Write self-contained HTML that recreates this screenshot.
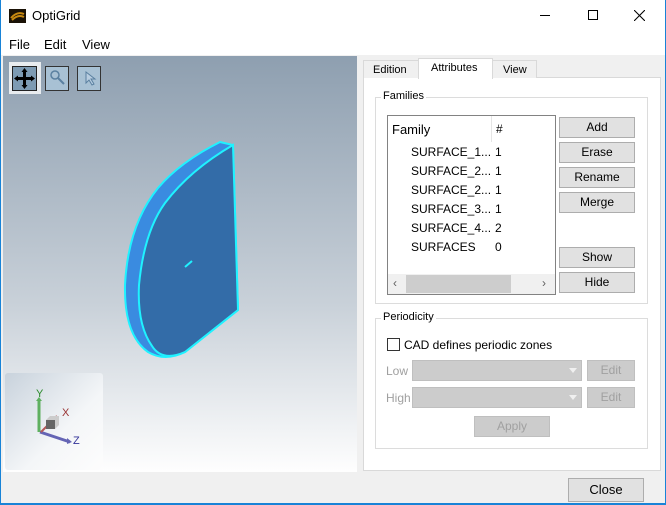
<!DOCTYPE html>
<html><head><meta charset="utf-8"><style>
*{box-sizing:border-box;margin:0;padding:0}
body{width:666px;height:505px;position:relative;background:#f0f0f0;font-family:"Liberation Sans",sans-serif;font-size:12px;color:#000;overflow:hidden}
.abs{position:absolute}
.btn{position:absolute;background:#e1e1e1;border:1px solid #adadad;text-align:center;line-height:18px;font-size:12px}
.dis{color:#a0a0a0;background:#cccccc;border-color:#bfbfbf}
.row{position:absolute;left:411px}
.num{position:absolute;left:495px}
</style></head><body>
<div class="abs" style="left:0;top:0;width:666px;height:32px;background:#fff"></div>
<div class="abs" style="left:9px;top:9px;width:17px;height:14px;background:#1a1206"><svg width="17" height="14"><path d="M2,9 Q8,2 15,5 M3,11 Q9,5 15,8" stroke="#c98a10" stroke-width="2" fill="none"/></svg></div>
<div class="abs" style="left:32px;top:8px;font-size:13px">OptiGrid</div>
<div class="abs" style="left:540px;top:15px;width:10px;height:1px;background:#000"></div>
<div class="abs" style="left:588px;top:10px;width:10px;height:10px;border:1px solid #000"></div>
<svg class="abs" style="left:634px;top:10px" width="11" height="11"><path d="M0,0L11,11M11,0L0,11" stroke="#000" stroke-width="1.1"/></svg>
<div class="abs" style="left:0;top:32px;width:666px;height:23px;background:#fff"></div>
<div class="abs" style="left:9px;top:37px;font-size:13px">File</div>
<div class="abs" style="left:44px;top:37px;font-size:13px">Edit</div>
<div class="abs" style="left:82px;top:37px;font-size:13px">View</div>
<div class="abs" style="left:3px;top:56px;width:354px;height:416px;background:linear-gradient(#8e9fb0,#c9d1d9 60%,#fefefe)"></div>
<div class="abs" style="left:9px;top:62px;width:32px;height:32px;background:#e8ecef"></div>
<div class="abs" style="left:12px;top:66px;width:25px;height:25px;background:#7d9bb3;border:1px solid #222"><svg width="23" height="23"><path d="M11.5,3V20M3,11.5H20" stroke="#000" stroke-width="3"/><path d="M11.5,1l-3,4h6zM11.5,22l-3,-4h6zM1,11.5l4,-3v6zM22,11.5l-4,-3v6z"/></svg></div>
<div class="abs" style="left:45px;top:66px;width:24px;height:25px;background:#a8c1d4;border:1px solid #333"><svg width="22" height="22"><circle cx="9" cy="8" r="4" fill="none" stroke="#5a80a0" stroke-width="1.5"/><path d="M12,11L18,17" stroke="#5a80a0" stroke-width="2"/></svg></div>
<div class="abs" style="left:77px;top:66px;width:24px;height:25px;background:#a8c1d4;border:1px solid #333"><svg width="22" height="22"><path d="M8,5L8,16L11,13L14,18L16,17L13,12L17,12Z" fill="#b8cde0" stroke="#5a80a0"/></svg></div>
<svg class="abs" style="left:0;top:0" width="360" height="480">
<path d="M220,142 L233,145 L238,310 L185,352 Q165,362 148,352 Q124,335 125,285 Q128,225 158,188 Q180,162 220,142 Z" fill="#3a8be0" stroke="#1ff2ff" stroke-width="2"/>
<path d="M233,145 L238,310 L185,352 Q162,362 152,346 Q137,325 139,285 Q144,232 165,203 Q190,170 233,145 Z" fill="#336ca8" stroke="#1ff2ff" stroke-width="2"/>
<path d="M185,267 L192,261" stroke="#1ff2ff" stroke-width="2"/>
</svg>
<div class="abs" style="left:5px;top:373px;width:98px;height:97px;background:linear-gradient(135deg,#c8d2dc,#f4f6f8 60%,#fdfdfd);border-radius:3px"></div>
<svg class="abs" style="left:0;top:370px" width="110" height="100">
<path d="M39,62V30" stroke="#5fb060" stroke-width="3"/><path d="M39,27l-3,4h6z" fill="#5fb060"/>
<text x="36" y="27" fill="#2b8a2b" font-size="11" font-family="Liberation Sans">Y</text>
<path d="M40,62L70,72" stroke="#6464b4" stroke-width="3"/><path d="M72,72l-5,-4v6z" fill="#6464b4"/>
<text x="73" y="74" fill="#333399" font-size="11" font-family="Liberation Sans">Z</text>
<path d="M41,62L57,46" stroke="#b45a5a" stroke-width="2"/>
<text x="62" y="46" fill="#993333" font-size="11" font-family="Liberation Sans">X</text>
<rect x="46" y="50" width="9" height="9" fill="#666"/><path d="M46,50l4,-4h9l-4,4zM55,50l4,-4v9l-4,4z" fill="#ccc"/>
</svg>
<div class="abs" style="left:0;top:0;width:1px;height:505px;background:#1883d7"></div>
<div class="abs" style="left:0;top:503px;width:666px;height:2px;background:#1883d7"></div>
<div class="abs" style="left:665px;top:0;width:1px;height:505px;background:#1883d7"></div>
<div class="abs" style="left:363px;top:77px;width:298px;height:394px;background:#fff;border:1px solid #d9d9d9"></div>
<div class="abs" style="left:363px;top:60px;width:56px;height:18px;background:#f0f0f0;border:1px solid #d9d9d9;border-bottom:none;padding:3px 0 0 9px;font-size:11px">Edition</div>
<div class="abs" style="left:492px;top:60px;width:45px;height:18px;background:#f0f0f0;border:1px solid #d9d9d9;border-bottom:none;padding:3px 0 0 10px;font-size:11px">View</div>
<div class="abs" style="left:418px;top:58px;width:75px;height:21px;background:#fff;border:1px solid #d9d9d9;border-bottom:none;padding:3px 0 0 12px;font-size:11px">Attributes</div>
<div class="abs" style="left:375px;top:97px;width:273px;height:207px;border:1px solid #dcdcdc"></div>
<div class="abs" style="left:381px;top:90px;background:#fff;padding:0 2px;font-size:11px">Families</div>
<div class="abs" style="left:387px;top:115px;width:169px;height:180px;border:1px solid #828282;background:#fff"></div>
<div class="abs" style="left:491px;top:116px;width:1px;height:26px;background:#e5e5e5"></div>
<div class="abs" style="left:392px;top:122px;font-size:13px">Family</div>
<div class="abs" style="left:496px;top:122px">#</div>
<div class="row" style="top:145px">SURFACE_1...</div><div class="num" style="top:145px">1</div>
<div class="row" style="top:164px">SURFACE_2...</div><div class="num" style="top:164px">1</div>
<div class="row" style="top:183px">SURFACE_2...</div><div class="num" style="top:183px">1</div>
<div class="row" style="top:202px">SURFACE_3...</div><div class="num" style="top:202px">1</div>
<div class="row" style="top:221px">SURFACE_4...</div><div class="num" style="top:221px">2</div>
<div class="row" style="top:240px">SURFACES</div><div class="num" style="top:240px">0</div>
<div class="abs" style="left:388px;top:274px;width:167px;height:20px;background:#f0f0f0"></div>
<div class="abs" style="left:406px;top:275px;width:105px;height:18px;background:#cdcdcd"></div>
<div class="abs" style="left:393px;top:276px;color:#606060">‹</div>
<div class="abs" style="left:542px;top:276px;color:#606060">›</div>
<div class="btn" style="left:559px;top:117px;width:76px;height:21px">Add</div>
<div class="btn" style="left:559px;top:142px;width:76px;height:21px">Erase</div>
<div class="btn" style="left:559px;top:167px;width:76px;height:21px">Rename</div>
<div class="btn" style="left:559px;top:192px;width:76px;height:21px">Merge</div>
<div class="btn" style="left:559px;top:247px;width:76px;height:21px">Show</div>
<div class="btn" style="left:559px;top:272px;width:76px;height:21px">Hide</div>
<div class="abs" style="left:375px;top:318px;width:273px;height:131px;border:1px solid #dcdcdc"></div>
<div class="abs" style="left:381px;top:311px;background:#fff;padding:0 2px;font-size:11px">Periodicity</div>
<div class="abs" style="left:387px;top:338px;width:13px;height:13px;border:1px solid #333;background:#fff"></div>
<div class="abs" style="left:404px;top:338px">CAD defines periodic zones</div>
<div class="abs" style="left:386px;top:364px;color:#a0a0a0">Low</div>
<div class="abs" style="left:386px;top:391px;color:#a0a0a0">High</div>
<div class="btn dis" style="left:412px;top:360px;width:170px;height:21px"></div>
<div class="btn dis" style="left:412px;top:387px;width:170px;height:21px"></div>
<div class="abs" style="left:569px;top:368px;border:4px solid transparent;border-top:5px solid #f0f0f0"></div>
<div class="abs" style="left:569px;top:395px;border:4px solid transparent;border-top:5px solid #f0f0f0"></div>
<div class="btn dis" style="left:587px;top:360px;width:48px;height:21px">Edit</div>
<div class="btn dis" style="left:587px;top:387px;width:48px;height:21px">Edit</div>
<div class="btn dis" style="left:474px;top:416px;width:76px;height:21px">Apply</div>
<div class="btn" style="left:568px;top:478px;width:76px;height:24px;line-height:22px;font-size:13px">Close</div>
</body></html>
